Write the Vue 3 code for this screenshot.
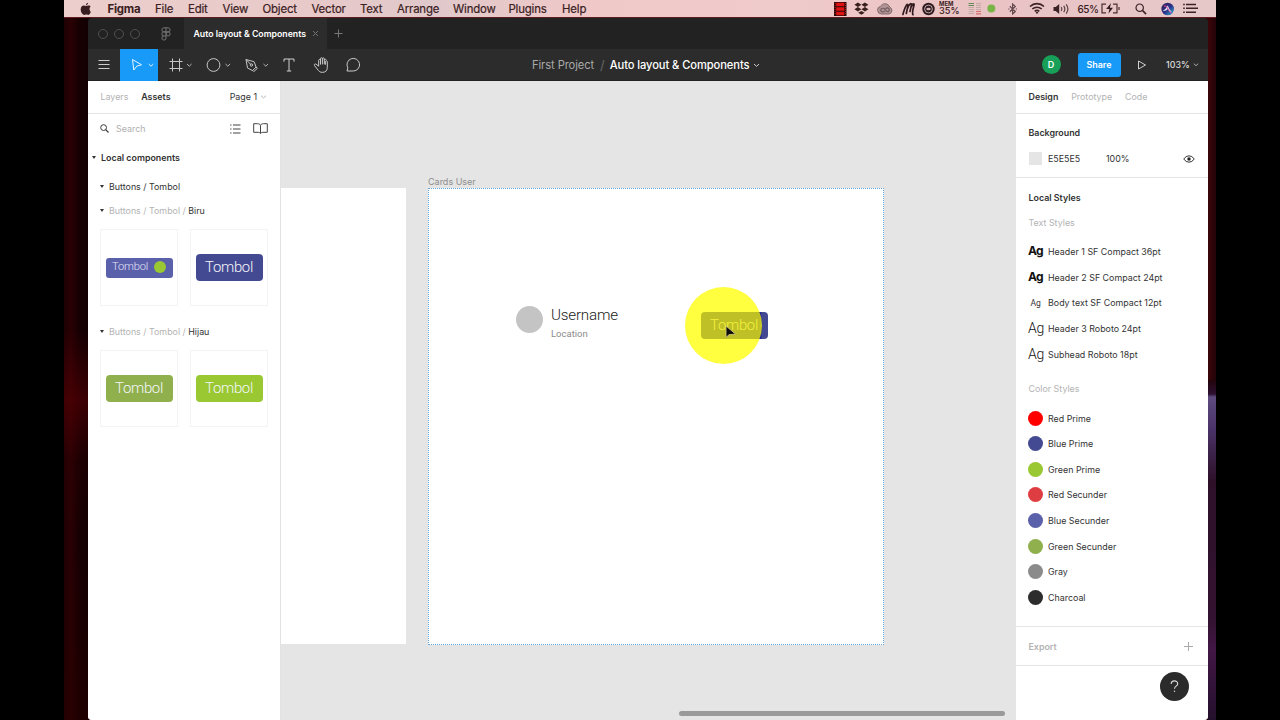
<script setup>
const menus = ['File', 'Edit', 'View', 'Object', 'Vector', 'Text', 'Arrange', 'Window', 'Plugins', 'Help']

const groups = [
  {
    name: 'Biru',
    cards: [
      { color: '#5b60ab', small: true },
      { color: '#444a91' },
    ],
  },
  {
    name: 'Hijau',
    cards: [{ color: '#8fb04c' }, { color: '#99c832' }],
  },
]

const textStyles = [
  { kind: 'bold', name: 'Header 1 SF Compact 36pt' },
  { kind: 'bold', name: 'Header 2 SF Compact 24pt' },
  { kind: 'tiny', name: 'Body text SF Compact 12pt' },
  { kind: 'light', name: 'Header 3 Roboto 24pt' },
  { kind: 'light', name: 'Subhead Roboto 18pt' },
]

const colorStyles = [
  { color: '#ff0000', name: 'Red Prime' },
  { color: '#444a91', name: 'Blue Prime' },
  { color: '#99c832', name: 'Green Prime' },
  { color: '#de3d41', name: 'Red Secunder' },
  { color: '#5b60ab', name: 'Blue Secunder' },
  { color: '#8fb04c', name: 'Green Secunder' },
  { color: '#8b8b8b', name: 'Gray' },
  { color: '#2d2d2d', name: 'Charcoal' },
]
</script>

<template>
  <div class="screen">
    <div class="desktop">
      <header class="menubar">
        <svg class="apple" width="12" height="14" viewBox="0 0 12 14"><path d="M8.1.8c.1 1.200-.9 2.300-2.100 2.400C5.900 2 7 .9 8.100.8zM10.800 9.900c-.5 1.300-1.600 3-2.700 3-.7 0-1-.4-1.900-.4s-1.200.4-1.900.4C2.800 12.900.7 10 .7 7.400c0-2.500 1.500-4 3.100-4 1 0 1.700.5 2.400.5.600 0 1.400-.6 2.500-.5.900 0 1.600.500 2 1.100-1.700 1.200-1.500 3.700.1 5.400z" fill="#371d20"/></svg>
        <b class="appname">Figma</b>
        <nav class="menus">
          <span v-for="m in menus" :key="m">{{ m }}</span>
        </nav>
        <div class="status">
          <svg width="13" height="14" viewBox="0 0 13 14"><path d="M0 0h12.500v14H0z" fill="#2c0808"/><path d="M2.200.7h8.100v3.500H2.200zM2.200 5.200h8.100v3.600H2.200zM2.200 9.800h8.100v3.500H2.200z" fill="#e01212"/><path d="M1.100 1v12M11.400 1v12" stroke="#c01a1a" stroke-dasharray="1 1" fill="none"/></svg>
          <svg width="15" height="13" viewBox="0 0 15 13"><path d="M3.900.4 7.400 2.700 3.900 5 .4 2.700zM10.900.4l3.500 2.300L10.900 5 7.400 2.700zM3.900 5l3.500 2.300-3.500 2.300L.4 7.300zM10.900 5l3.500 2.300-3.500 2.300-3.500-2.300zM7.400 8.900l3.200 1.900-3.200 2-3.200-2z" fill="#38201f"/></svg>
          <svg width="16" height="12" viewBox="0 0 16 12"><path d="M4.300 11A3.900 3.900 0 0 1 3.600 3.300 5 5 0 0 1 12.700 4 3.700 3.700 0 0 1 12 11z" fill="#b09496" stroke="#86696c"/><path d="M8 7.800C6 10 3.300 8.500 3.800 6.600s3-1.700 4.200-.2l1.500 1.700c1.500 1.300 3.400-.3 2.700-2S9.600 4.700 8.500 5.700" fill="none" stroke="#765c5f" stroke-width="1.200"/></svg>
          <svg width="14" height="14" viewBox="0 0 14 14"><path d="M.9 12.500C1.800 9 2.800 5.500 4.600 3c.8-1 1.600-.4 1.300.9L4.300 11.500M5.500 6.500C6.300 4.300 7 2.800 8.200 1.900c.9-.5 1.500.1 1.200 1.200L8 9.500M9.200 5c.6-1.500 1-2.400 1.800-3 .8-.5 1.300 0 1 1.200-1.100 4-2.200 7.500-1 9.500" fill="none" stroke="#321b1f" stroke-width="1.700" stroke-linecap="round"/></svg>
          <svg width="14" height="14" viewBox="0 0 14 14"><circle cx="6.500" cy="7" r="6.200" fill="#2d1a1e"/><circle cx="6.500" cy="7" r="3.900" fill="none" stroke="#e7c4c6" stroke-width=".8"/><ellipse cx="6.500" cy="7" rx="2.200" ry="1.300" fill="#d9b7ba"/></svg>
          <span class="mem"><i>MEM</i><i class="pct">35%</i></span>
          <svg width="14" height="13" viewBox="0 0 14 13"><path d="M.5 1.500H6M.5 3.500H6" stroke="#5f8a57" stroke-width="1.200"/><path d="M.5 5.500H6M.5 7.500H6M.5 9.500H6M.5 11.500H6M8 1.500h5M8 3.500h5M8 5.500h5M8 7.500h5" stroke="#c3aaa9"/><path d="M8 9.500h5M8 11.800h5" stroke="#d56c6c" stroke-width="1.200"/></svg>
          <svg width="9" height="9" viewBox="0 0 9 9"><circle cx="4.300" cy="4.500" r="4" fill="#79b447"/></svg>
          <svg width="10" height="12" viewBox="0 0 10 12"><path d="m1.800 3.300 5.500 5.200L4.600 11V1l2.700 2.500-5.500 5.200M.2 6h1.200M7.800 6H9" fill="none" stroke="#654a4e" stroke-width="1.200"/></svg>
          <svg width="17" height="13" viewBox="0 0 17 13"><path d="M1 4.500a10 10 0 0 1 14 0M3.300 7a7 7 0 0 1 9.400 0M5.700 9.300a3.700 3.700 0 0 1 4.600 0" fill="none" stroke="#3b2224" stroke-width="1.600"/><path d="M6.600 10.500a2 2 0 0 1 2.800 0L8 12z" fill="#3b2224"/></svg>
          <svg width="18" height="12" viewBox="0 0 18 12"><path d="M.5 4h2.200l3.500-3v10L2.700 8H.5z" fill="#3b2224"/><path d="M8.200 4q1.500 2 0 4M10.700 2.800q2.300 3.200 0 6.400M13.200 1.400q3.400 4.600 0 9.200" fill="none" stroke="#5b4144" stroke-width="1.200"/></svg>
          <span class="battery">65%</span>
          <svg width="20" height="11" viewBox="0 0 20 11"><path d="M5 1.200H1v8.600h4M12 1.200h4v8.600h-4M18 4v3" fill="none" stroke="#4a2e30" stroke-width="1.200"/><path d="M10 0 5.200 6h3.200l-1 4.800L12 4.800H8.900z" fill="#321d20"/></svg>
          <svg width="12" height="12" viewBox="0 0 12 12"><circle cx="4.700" cy="4.700" r="3.700" fill="none" stroke="#3b2224" stroke-width="1.200"/><path d="m7.400 7.400 3.700 3.700" stroke="#3b2224" stroke-width="1.500"/></svg>
          <svg width="14" height="14" viewBox="0 0 14 14"><defs><linearGradient id="orb" x1="0" y1="0" x2="1" y2="1"><stop offset="0" stop-color="#35204f"/><stop offset=".5" stop-color="#2b2f85"/><stop offset="1" stop-color="#31b7e0"/></linearGradient></defs><circle cx="6.700" cy="7" r="6.300" fill="url(#orb)"/><path d="M1.800 9Q5 7 6.800 3.500 8 7.500 11 10.500 8 9.500 6.700 7 5 9.500 1.800 9z" fill="#dfe3fa"/><path d="M3 4Q5.500 3.200 6.500 6T10.500 11.500" fill="none" stroke="#df4c98"/></svg>
          <svg width="16" height="11" viewBox="0 0 16 11"><path d="M3 1.500h10M3 5.300h12M3 9.200h10M.2 1.500h1.600M.2 5.300h1.600M.2 9.200h1.600" stroke="#3b2224" stroke-width="1.500"/></svg>
        </div>
      </header>

      <main class="window">
        <div class="titlebar">
          <div class="lights"><i></i><i></i><i></i></div>
          <svg class="logo" width="10" height="14" viewBox="0 0 10 14"><path d="M5 .8H2.900a2.050 2.050 0 0 0 0 4.100H5zM5 .8h2.100a2.050 2.050 0 0 1 0 4.100H5M5 4.900H2.900a2.050 2.050 0 0 0 0 4.100H5M2.900 9A2.050 2.050 0 1 0 5 11.050V4.900M7.100 4.900a2.050 2.050 0 1 1 0 4.100 2.050 2.050 0 0 1 0-4.100z" fill="none" stroke="#757575"/></svg>
          <div class="tab">
            <span>Auto layout &amp; Components</span>
            <svg width="7" height="7" viewBox="0 0 7 7"><path d="m1 1 5 5M6 1 1 6" stroke="#737373"/></svg>
          </div>
          <svg class="newtab" width="9" height="9" viewBox="0 0 9 9"><path d="M4.500.5v8M.5 4.500h8" stroke="#777"/></svg>
        </div>

        <div class="toolbar">
          <div class="tools">
            <svg width="32" height="32" viewBox="0 0 32 32"><path d="M10.500 11.500h11M10.500 15.500h11M10.500 19.500h11" stroke="#ccc"/></svg>
            <svg class="active" width="38" height="32" viewBox="0 0 38 32"><path d="m12.500 10.500 9 5.300-4.700 1.300-3 3.900z" fill="none" stroke="#e8f5ff" stroke-linejoin="round"/><path d="m28.700 15 2.300 2.200 2.300-2.200" fill="none" stroke="#d5edff"/></svg>
            <svg width="38" height="32" viewBox="0 0 38 32"><path d="M14.500 9.500v13M21.500 9.500v13M11.500 12.500h13M11.500 19.500h13" stroke="#c6c6c6"/><path d="m29 15 2.300 2.200 2.300-2.200" fill="none" stroke="#b5b5b5"/></svg>
            <svg width="38" height="32" viewBox="0 0 38 32"><circle cx="17.500" cy="16" r="6.400" fill="none" stroke="#c6c6c6"/><path d="m29.500 15 2.300 2.200 2.300-2.200" fill="none" stroke="#b5b5b5"/></svg>
            <svg width="38" height="32" viewBox="0 0 38 32"><path d="m12 10.500 8.100 2.200 2 5.300-3.600 3.600-5-2.600zM12 10.500l5 5.200M22 17.900l1.400 1.400-3.600 3.300-1.400-1.400" fill="none" stroke="#c6c6c6" stroke-linejoin="round"/><circle cx="17.400" cy="16" r="1.200" fill="none" stroke="#c6c6c6"/><path d="m29.500 15 2.300 2.200 2.300-2.200" fill="none" stroke="#b5b5b5"/></svg>
            <svg width="32" height="32" viewBox="0 0 32 32"><path d="M12 12.700V10h10v2.700M17 10v12M14.800 22h4.400" fill="none" stroke="#cfcfcf"/></svg>
            <svg width="32" height="32" viewBox="0 0 32 32"><path d="m12.900 17.400-2.600-2c-1-.8-2.300.3-1.600 1.400l4 5c1 1.200 2 1.700 3.500 1.700h.8c3 0 4.500-2 4.500-4.800v-5.800c0-1.300-1.900-1.300-1.900 0v3M12.900 17.400v-5.900c0-1.200 1.800-1.200 1.800 0v4.300M14.700 12V9.800c0-1.200 1.900-1.200 1.900 0v5.800M16.600 10c0-1.200 1.900-1.200 1.900 0v5.600M18.500 11.300c0-1.200 1.900-1.200 1.900 0" transform="translate(1.800 -.2)" fill="none" stroke="#c9c9c9"/></svg>
            <svg width="32" height="32" viewBox="0 0 32 32"><path d="M11 22h6.300a6.300 6.300 0 1 0-5.500-3.200z" fill="none" stroke="#c9c9c9" stroke-linejoin="round"/></svg>
          </div>
          <div class="crumbs">
            <span class="project">First Project</span><span class="slash">/</span><span class="doc">Auto layout &amp; Components</span>
            <svg width="7" height="5" viewBox="0 0 7 5"><path d="m1 1 2.500 2.400L6 1" fill="none" stroke="#ccc"/></svg>
          </div>
          <div class="right">
            <span class="avatar">D</span>
            <span class="share">Share</span>
            <svg class="play" width="10" height="10" viewBox="0 0 10 10"><path d="M1.500 1 8.500 5l-7 4z" fill="none" stroke="#cfcfcf" stroke-linejoin="round"/></svg>
            <span class="zoomlevel">103%</span>
            <svg width="6" height="4" viewBox="0 0 6 4"><path d="m.8.7 2.200 2L5.200.7" fill="none" stroke="#aaa"/></svg>
          </div>
        </div>

        <div class="body">
          <aside class="assets">
            <div class="tabs">
              <span class="muted">Layers</span><b>Assets</b>
              <span class="page">Page 1</span>
              <svg width="7" height="4" viewBox="0 0 7 4"><path d="m1 .7 2.500 2.200L6 .7" fill="none" stroke="#b5b5b5"/></svg>
            </div>
            <div class="search">
              <svg width="9" height="9" viewBox="0 0 9 9"><circle cx="3.600" cy="3.600" r="2.900" fill="none" stroke="#3a3a3a"/><path d="m5.700 5.700 2.800 2.800" stroke="#3a3a3a" stroke-width="1.200"/></svg>
              <span>Search</span>
              <svg class="list" width="11" height="10" viewBox="0 0 11 10"><path d="M3 1h7.500M3 5h7.500M3 9h7.500M.2 1h1.300M.2 5h1.300M.2 9h1.300" stroke="#444"/></svg>
              <svg width="15" height="11" viewBox="0 0 15 11"><path d="M7.500 2.200C6.800 1 5.500.7 4.500.7H.7v8.600h4.300c1 0 2 .3 2.500 1.200.5-.9 1.500-1.200 2.500-1.200h4.300V.7h-3.800c-1 0-2.300.3-3 1.500zM7.500 2.200v8" fill="none" stroke="#444"/></svg>
            </div>
            <div class="tree local"><i class="caret"></i><b>Local components</b></div>
            <div class="tree buttons"><i class="caret"></i><span>Buttons / Tombol</span></div>
            <section v-for="g in groups" :key="g.name" class="group">
              <div class="tree"><i class="caret"></i><span class="path">Buttons / Tombol / <em>{{ g.name }}</em></span></div>
              <div class="cards">
                <div v-for="(c, i) in g.cards" :key="i" class="card">
                  <div class="btn" :class="{ small: c.small }" :style="{ background: c.color }">
                    Tombol<i v-if="c.small" class="dot"></i>
                  </div>
                </div>
              </div>
            </section>
          </aside>

          <section class="canvas">
            <div class="frame side"></div>
            <div class="label">Cards User</div>
            <div class="frame cardframe"></div>
            <div class="user">
              <i class="pic"></i>
              <div><div class="uname">Username</div><div class="loc">Location</div></div>
            </div>
            <div class="btn dragged">Tombol</div>
            <div class="halo"></div>
            <svg class="cursor" width="12" height="16" viewBox="0 0 12 16"><path d="M1 1v11.500l3-2.800L10.500 9z" fill="#0c0c0c" stroke="#cfc67a" stroke-width=".9" stroke-linejoin="round"/></svg>
            <div class="scroll"></div>
          </section>

          <aside class="design">
            <div class="tabs"><b>Design</b><span class="muted">Prototype</span><span class="muted">Code</span></div>
            <div class="background">
              <b>Background</b>
              <div class="fill">
                <i class="swatch"></i><span class="hex">E5E5E5</span><span>100%</span>
                <svg width="12" height="8" viewBox="0 0 12 8"><path d="M.7 4Q3 .8 6 .8T11.300 4Q9 7.200 6 7.200T.7 4z" fill="none" stroke="#333"/><circle cx="6" cy="4" r="1.700" fill="#222"/></svg>
              </div>
            </div>
            <div class="styles">
              <b class="heading">Local Styles</b>
              <div class="sub first">Text Styles</div>
              <div v-for="t in textStyles" :key="t.name" class="row">
                <span class="ag" :class="t.kind">Ag</span><span>{{ t.name }}</span>
              </div>
              <div class="sub second">Color Styles</div>
              <div v-for="c in colorStyles" :key="c.name" class="row">
                <i class="chip" :style="{ background: c.color }"></i><span>{{ c.name }}</span>
              </div>
            </div>
            <div class="export">
              <b>Export</b>
              <svg width="9" height="9" viewBox="0 0 9 9"><path d="M4.500 0v9M0 4.500h9" stroke="#aaa"/></svg>
            </div>
            <div class="help"><svg width="9" height="13" viewBox="0 0 9 13"><path d="M1.200 3.900c0-4 6.500-4 6.500-.2 0 2.400-3.200 2.400-3.200 5" fill="none" stroke="#ddd" stroke-width="1.100"/><circle cx="4.500" cy="11.300" r=".7" fill="#ddd"/></svg></div>
          </aside>
        </div>
      </main>
    </div>
  </div>
</template>

<style>
html, body { margin: 0; background: #000; overflow: hidden; }
</style>

<style scoped>
* { box-sizing: border-box; }
svg { display: block; flex: none; }
i, em { font-style: normal; }
b { font-weight: 600; }
.screen {
  width: 1280px; height: 720px; background: #000; padding: 0 64px; overflow: hidden;
  font-family: Inter, "Liberation Sans", sans-serif; font-size: 8.900px; color: #333; white-space: nowrap;
}
.desktop {
  width: 1152px; height: 720px; display: flex; flex-direction: column;
  background:
    linear-gradient(90deg, transparent 1140px, #3b0508 1144px, #23040a 1152px) 0 0 / 100% 380px no-repeat,
    linear-gradient(180deg, #23040a 380px, #2c1030 394px, #5e4b80 397px, #493267 430px, #2e1129 480px, #331231 620px, #421745 650px, #24102d 720px) 1144px 0 / 8px 720px no-repeat,
    linear-gradient(180deg, transparent 330px, rgba(100,0,4,.5) 400px, rgba(60,0,4,.2) 460px, transparent 540px, rgba(40,0,0,.5) 720px),
    linear-gradient(90deg, #1e0003 0, #2a0104 7px, #180002 14px, #120002 24px);
}

.menubar {
  height: 18px; flex: none; display: flex; align-items: center; color: #3a2022;
  background: linear-gradient(90deg, #eccfcd 0, #e8c9c9 22%, #e0c9cb 32%, #f0c8c8 45%, #f0cbcb 62%, #eac3c5 80%, #e6c8c9 100%);
  border-bottom: 1px solid #5d1c20; font-size: 11.400px; letter-spacing: -.16px; font-weight: 500;
}
.apple { margin-left: 16px; }
.appname { width: 47.500px; margin-left: 15.500px; font-weight: 700; letter-spacing: -.2px; }
.menus { display: grid; grid-template-columns: 33px 34.500px 40px 49px 48.500px 37px 56px 55.500px 53.500px 272px; font-weight: 400; -webkit-text-stroke: .2px #3a2022; }
.status { display: grid; align-items: center; grid-template-columns: 20px 23px 25px 20px 17px 29px 19px 21px 21px 24px 24.500px 23.500px 34px 26px 22px 17px; }
.mem { display: flex; flex-direction: column; font-size: 5.800px; line-height: 6px; font-weight: 700; letter-spacing: .1px; }
.mem .pct { font-size: 9.200px; line-height: 8.600px; font-weight: 500; letter-spacing: 0; }
.battery { font-size: 10px; letter-spacing: -.5px; }

.window { width: 1120px; flex: 1; min-height: 0; margin-left: 24px; display: flex; flex-direction: column; border-radius: 4px; overflow: hidden; }
.titlebar { height: 31px; flex: none; background: #222; display: flex; align-items: center; }
.lights { display: flex; gap: 6px; margin-left: 10px; }
.lights i { width: 10px; height: 10px; border: 1px solid #505050; border-radius: 50%; }
.logo { margin-left: 21px; }
.tab { height: 31px; width: 142.500px; margin-left: 13px; padding-left: 9.500px; background: #2c2c2c; color: #fff; display: flex; align-items: center; justify-content: space-between; padding-right: 8px; font-size: 8.750px; font-weight: 600; }
.newtab { margin-left: 7.500px; }

.toolbar { height: 32px; flex: none; background: #2c2c2c; display: flex; border-bottom: 1px solid #222; }
.tools { display: flex; }
.active { background: #189bf8; }
.crumbs { margin-left: 164px; display: flex; align-items: center; font-size: 11.150px; letter-spacing: -.08px; }
.project { color: #aaa; }
.slash { color: #666; margin: 0 5px 0 6px; font-size: 13px; }
.doc { color: #fff; font-weight: 500; }
.crumbs svg { margin-left: 4px; margin-top: 1px; }
.right { margin-left: auto; display: flex; align-items: center; color: #ddd; padding-right: 9.500px; }
.avatar { width: 19px; height: 19px; border-radius: 50%; background: #18a058; color: #fff; display: grid; place-items: center; font-size: 9px; font-weight: 600; }
.share { width: 43px; height: 24px; margin-left: 17px; border-radius: 3px; background: #189bf8; color: #fff; display: grid; place-items: center; font-weight: 600; font-size: 8.900px; }
.play { margin-left: 16px; }
.zoomlevel { margin-left: 19.500px; width: 26.500px; font-size: 8.900px; font-weight: 500; }

.body { flex: 1; min-height: 0; display: flex; background: #e5e5e5; }
.assets { width: 193px; background: #fff; border-right: 1px solid #e2e2e2; }
.tabs { height: 33px; display: flex; align-items: center; border-bottom: 1px solid #e5e5e5; padding-bottom: 1px; }
.muted { color: #b3b3b3; }
.assets .tabs { padding: 0 13px 1px 12.500px; }
.assets .tabs b { margin-left: 12.800px; }
.page { margin-left: auto; margin-right: 3px; }
.search { height: 29px; display: flex; align-items: center; padding: 0 12px; color: #b0b0b0; }
.search span { margin-left: 7px; }
.search .list { margin-left: auto; margin-right: 12px; }
.tree { height: 17px; display: flex; align-items: center; padding-left: 12px; }
.caret { border: 2.500px solid transparent; border-top: 3.500px solid #333; border-bottom: 0; margin-right: 5px; }
.tree.local { height: 28px; padding-left: 4px; }
.tree.buttons { height: 30px; margin-bottom: 1px; }
.path { color: #b3b3b3; }
.path em { color: #333; }
.cards { display: flex; gap: 12px; padding: 10px 0 0 12px; height: 87px; margin-bottom: 17px; }
.card { width: 78px; height: 77px; border: 1px solid #f3f3f3; display: grid; place-items: center; }
.btn { width: 67px; height: 27px; border-radius: 4px; color: #f5f5fa; font: 300 14.900px/26px Roboto, sans-serif; text-align: center; letter-spacing: -.3px; }
.btn.small { height: 20px; font-size: 11.200px; line-height: 18px; padding-bottom: 1px; display: flex; align-items: center; justify-content: center; gap: 6px; border-radius: 3px; color: #e0e2f6; letter-spacing: -.2px; }
.dot { width: 12px; height: 12px; border-radius: 50%; background: #99c832; }

.canvas { position: relative; flex: 1; background: #e5e5e5; overflow: hidden; }
.frame { position: absolute; background: #fff; top: 107px; height: 456px; }
.side { left: 0; width: 125px; }
.cardframe { left: 147px; width: 456px; height: 457px; border: 1px dotted #63a9e0; }
.label { position: absolute; left: 147px; top: 95px; color: #8e8e8e; font-size: 9px; }
.user { position: absolute; left: 235px; top: 225px; display: flex; gap: 8px; font-family: Roboto, sans-serif; }
.pic { width: 27px; height: 27px; border-radius: 50%; background: #c4c4c4; }
.uname { font-size: 15.200px; line-height: 19px; font-weight: 300; color: #222; letter-spacing: -.2px; }
.loc { font-size: 9.500px; line-height: 14px; margin-top: 2px; color: #8b8b8b; }
.dragged { position: absolute; left: 419.500px; top: 231px; background: linear-gradient(90deg, #000096 0 58px, #444a91 61px); color: rgba(255, 255, 255, .8); }
.halo { position: absolute; left: 404px; top: 205.500px; width: 77px; height: 77px; border-radius: 50%; background: rgba(255, 255, 0, .75); }
.cursor { position: absolute; left: 444px; top: 244px; }
.scroll { position: absolute; right: 11px; bottom: 4px; width: 326px; height: 5px; border-radius: 3px; background: #9a9a9a; }

.design { width: 192px; background: #fff; position: relative; }
.design .tabs { padding-left: 12.500px; gap: 12.800px; }
.background { height: 64px; border-bottom: 1px solid #e5e5e5; padding: 0 13px 0 12.500px; }
.background > b { display: block; line-height: 38px; }
.fill { display: flex; align-items: center; height: 13px; }
.swatch { width: 13px; height: 13px; background: #e5e5e5; margin-right: 6.500px; }
.hex { width: 58px; }
.fill svg { margin-left: auto; }
.styles { padding: 0 12px; height: 449px; border-bottom: 1px solid #e5e5e5; }
.heading { display: block; line-height: 39px; padding-left: .5px; }
.sub { color: #b3b3b3; padding-left: .5px; }
.first { height: 22px; line-height: 11px; }
.second { height: 38.300px; line-height: 43px; }
.row { height: 25.600px; display: flex; align-items: center; }
.ag { width: 20px; font-size: 12px; line-height: 16px; }
.ag.bold { font-weight: 700; color: #111; letter-spacing: -.6px; padding-bottom: 1px; }
.ag.tiny { font-size: 8.500px; padding-left: 2.500px; font-family: Roboto, sans-serif; }
.ag.light { font: 300 14px/16px Roboto, sans-serif; color: #111; padding-bottom: 1px; letter-spacing: -.3px; }
.chip { width: 15px; height: 15px; border-radius: 50%; margin-right: 5px; }
.export { height: 39px; display: flex; align-items: center; justify-content: space-between; padding: 0 15px 0 12.500px; border-bottom: 1px solid #e5e5e5; color: #b3b3b3; }
.help { position: absolute; right: 19px; bottom: 19px; width: 29px; height: 29px; border-radius: 50%; background: #2b2b2b; display: grid; place-items: center; }
</style>
